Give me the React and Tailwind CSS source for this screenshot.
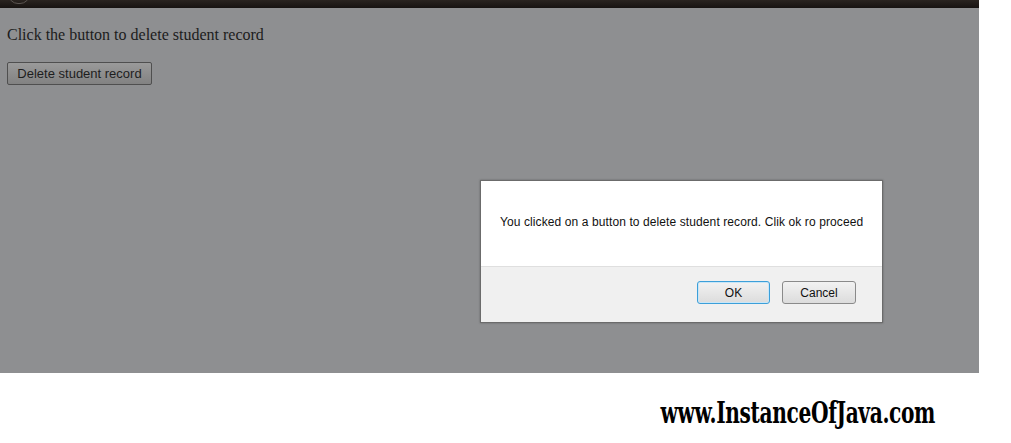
export default function App() {
  return (
    <div className="w-[1011px] h-[443px] bg-white flex flex-col overflow-hidden">
      <div className="w-[979px] h-[373px] bg-[#8e8f91] flex flex-col relative">
        {/* top bar */}
        <div className="h-[8px] bg-gradient-to-b from-[#2a2420] to-[#171311] relative overflow-hidden">
          <div className="absolute left-[8px] top-[-16px] w-[22px] h-[20px] rounded-full border border-[#5a5450]"></div>
        </div>
        <p className="mt-[17px] ml-[7px] text-[16px] leading-[19px] text-[#1c1c1c] font-['Liberation_Serif',serif]">
          Click the button to delete student record
        </p>
        <div className="mt-[16px] ml-[7px]">
          <button className="w-[145px] h-[23px] border border-[#4f4f4f] rounded-[2px] bg-gradient-to-b from-[#9a9a9a] to-[#828282] text-[13px] text-[#1e1e1e] font-['Liberation_Sans',sans-serif]">
            Delete student record
          </button>
        </div>
        {/* dialog */}
        <div className="absolute left-[480px] top-[180px] w-[403px] h-[143px] border border-[#6b6b6b] bg-white flex flex-col shadow-[0_0_2px_rgba(0,0,0,0.3)]">
          <div className="h-[85px] flex items-center pl-[19px] pb-[3px] text-[12px] tracking-[0.1px] text-[#111] font-['Liberation_Sans',sans-serif]">
            You clicked on a button to delete student record. Clik ok ro proceed
          </div>
          <div className="flex-1 bg-[#f0f0f0] border-t border-[#dfdfdf] flex items-start justify-end gap-[12px] pt-[14px] pr-[26px]">
            <button className="w-[73px] h-[23px] border border-[#3c9fd9] rounded-[3px] bg-gradient-to-b from-[#f2f2f2] to-[#dcdcdc] text-[12px] text-[#111] font-['Liberation_Sans',sans-serif] shadow-[inset_0_0_0_1px_#c9e6f7]">
              OK
            </button>
            <button className="w-[74px] h-[23px] border border-[#8a8a8a] rounded-[3px] bg-gradient-to-b from-[#f2f2f2] to-[#dcdcdc] text-[12px] text-[#111] font-['Liberation_Sans',sans-serif]">
              Cancel
            </button>
          </div>
        </div>
      </div>
      <div className="flex-1 flex justify-end pr-[76px] pt-[24px]">
        <span className="inline-block origin-right [transform:scaleX(0.695)] text-[29px] leading-[32px] font-bold text-black font-['DejaVu_Serif',serif] tracking-[-0.5px]">
          www.InstanceOfJava.com
        </span>
      </div>
    </div>
  );
}
